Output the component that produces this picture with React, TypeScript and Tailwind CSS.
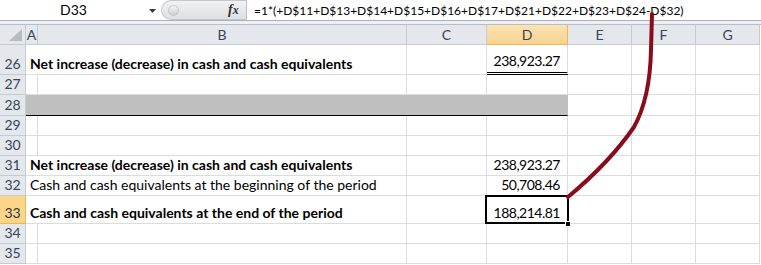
import React from "react";

const FONT = { fontFamily: "Lato, 'Noto Sans', sans-serif" };

type RowProps = {
  num: string;
  h: string;
  active?: boolean;
  children: React.ReactNode;
};

// one sheet row: header cell + cells
const Row: React.FC<RowProps> = ({ num, h, active, children }) => (
  <div className={`flex ${h}`}>
    <div
      className={`w-[26px] shrink-0 flex items-end justify-center pb-[1px] text-[14px] leading-[18px] border-r border-b ${
        active
          ? "bg-[#fdd58a] border-[#f0b64f] text-[#2c3440]"
          : "bg-[#e4e7ec] border-[#c6cbd2] text-[#3a4556]"
      }`}
    >
      {num}
    </div>
    {children}
  </div>
);

const Cell: React.FC<{ w: string; className?: string; children?: React.ReactNode }> = ({
  w,
  className = "",
  children,
}) => (
  <div
    className={`${w} shrink-0 border-r border-b border-[#dadcdd] flex items-end leading-[20px] ${className}`}
  >
    {children}
  </div>
);

// empty tail columns E, F, G
const Tail = () => (
  <>
    <Cell w="w-[64px]" />
    <Cell w="w-[64px]" />
    <Cell w="w-[64px]" />
  </>
);

const EmptyRow: React.FC<{ num: string }> = ({ num }) => (
  <Row num={num} h="h-[20px]">
    <Cell w="w-[12px]" />
    <Cell w="w-[369px]" />
    <Cell w="w-[80px]" />
    <Cell w="w-[81px]" />
    <Tail />
  </Row>
);

const LabelRow: React.FC<{
  num: string;
  h: string;
  label: string;
  bold?: boolean;
  value: string;
  active?: boolean;
  valueClass?: string;
  children?: React.ReactNode;
}> = ({ num, h, label, bold, value, active, valueClass = "", children }) => (
  <Row num={num} h={h} active={active}>
    <Cell w="w-[381px]" className={`pl-[4px] whitespace-nowrap ${bold ? "font-bold" : ""}`}>
      {label}
    </Cell>
    <Cell w="w-[80px]" />
    <Cell w="w-[81px]" className={`justify-end pr-[7px] relative tracking-[-0.5px] ${valueClass}`}>
      {value}
      {children}
    </Cell>
    <Tail />
  </Row>
);

export default function App() {
  return (
    <div className="relative w-[761px] h-[265px] overflow-hidden bg-white text-[14px] text-black" style={FONT}>
      {/* formula bar */}
      <div className="flex h-[21px] border-b border-[#a9b1bb] bg-white">
        <div className="w-[161px] shrink-0 relative flex items-center">
          <span className="absolute left-[60px] top-[1px] leading-[18px]">D33</span>
          <svg className="absolute left-[149px] top-[9px]" width="7" height="4" viewBox="0 0 7 4">
            <path d="M0 0h7L3.5 4z" fill="#3b3b3b" />
          </svg>
        </div>
        <div className="w-[86px] shrink-0 relative rounded-l-[11px] border border-r-[#b9bec6] border-[#c3c8cf] bg-gradient-to-b from-[#f1f2f4] to-[#dcdfe4]">
          <div className="absolute left-[6px] top-[4px] w-[11px] h-[11px] rounded-full bg-gradient-to-b from-[#f6f7f8] to-[#c9cdd3] border border-[#c2c6cc]" />
          <span
            className="absolute left-[66px] top-[0px] italic font-bold text-[14px] leading-[18px] text-[#333]"
            style={{ fontFamily: "'Liberation Serif', serif" }}
          >
            f<span className="text-[12px]">x</span>
          </span>
        </div>
        <div className="flex-1 pl-[7px] text-[12px] leading-[21px] whitespace-nowrap">
          =1*(+D$11+D$13+D$14+D$15+D$16+D$17+D$21+D$22+D$23+D$24-D$32)
        </div>
      </div>
      <div className="h-[4px] bg-[#eef0f3] border-b border-[#b8bec6]" />

      {/* column headers */}
      <div className="flex h-[20px] text-[14px] text-[#3a4556]">
        <div className="w-[26px] shrink-0 relative bg-[#e4e7ec] border-r border-b border-[#c6cbd2]">
          <svg className="absolute right-[3px] bottom-[3px]" width="13" height="12" viewBox="0 0 13 12">
            <path d="M13 0V12H0z" fill="#b7bcc3" />
          </svg>
        </div>
        {[
          ["A", "w-[12px]"],
          ["B", "w-[369px]"],
          ["C", "w-[80px]"],
          ["D", "w-[81px]"],
          ["E", "w-[64px]"],
          ["F", "w-[64px]"],
          ["G", "w-[64px]"],
        ].map(([l, w]) => (
          <div
            key={l}
            className={`${w} shrink-0 flex items-center justify-center border-r border-b leading-[18px] ${
              l === "D"
                ? "bg-gradient-to-b from-[#fbe3b3] to-[#f7d38c] border-[#f0b64f]"
                : "bg-[#e4e7ec] border-[#c6cbd2]"
            }`}
          >
            {l}
          </div>
        ))}
      </div>

      {/* sheet rows */}
      <LabelRow
        num="26"
        h="h-[30px]"
        label="Net increase (decrease) in cash and cash equivalents"
        bold
        value="238,923.27"
        valueClass="border-b-[3px] border-b-black border-double pb-[1px]"
      />
      <EmptyRow num="27" />
      <Row num="28" h="h-[21px]">
        <div className="w-[542px] shrink-0 bg-[#bfbfbf] border-b border-black border-r border-r-[#bfbfbf]" />
        <Tail />
      </Row>
      <EmptyRow num="29" />
      <EmptyRow num="30" />
      <LabelRow
        num="31"
        h="h-[20px]"
        label="Net increase (decrease) in cash and cash equivalents"
        bold
        value="238,923.27"
      />
      <LabelRow
        num="32"
        h="h-[20px]"
        label="Cash and cash equivalents at the beginning of the period"
        value="50,708.46"
      />
      <LabelRow
        num="33"
        h="h-[28px]"
        label="Cash and cash equivalents at the end of the period"
        bold
        value="188,214.81"
        active
      >
        {/* selection box + fill handle */}
        <div className="absolute left-[-2px] top-[-1px] right-[-2px] bottom-[-1px] border-[2px] border-black" />
        <div className="absolute right-[-4px] bottom-[-4px] w-[6px] h-[6px] bg-black border border-white" />
      </LabelRow>
      <EmptyRow num="34" />
      <EmptyRow num="35" />

      {/* red annotation line */}
      <svg className="absolute inset-0 pointer-events-none" width="761" height="265" viewBox="0 0 761 265">
        <path
          d="M652 14 L651 50 Q650 98 634 127 Q610 162 568 197"
          fill="none"
          stroke="#8a0b1c"
          strokeWidth="4"
          strokeLinecap="round"
        />
      </svg>
    </div>
  );
}
